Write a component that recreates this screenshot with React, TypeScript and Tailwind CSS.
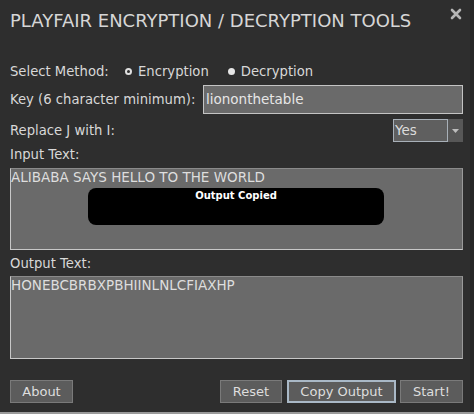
import React from "react";

export default function App() {
  const font = { fontFamily: '"DejaVu Sans", Verdana, sans-serif' };
  return (
    <div className="w-[474px] h-[414px] bg-[#2e2e2e] flex flex-col overflow-hidden" style={font}>
      <div className="flex flex-1 min-h-0">
        <div className="flex-1 flex flex-col pl-[10px] pr-[7px] relative">
          {/* title */}
          <div className="h-[40px] flex items-center text-[18px] text-[#d6d6d6] whitespace-nowrap">
            PLAYFAIR ENCRYPTION / DECRYPTION TOOLS
          </div>
          <div className="absolute right-[8px] top-[8px]">
            <svg width="12" height="12" viewBox="0 0 12 12">
              <path d="M2 2 L10 10 M10 2 L2 10" stroke="#b5b5b5" strokeWidth="2.6" strokeLinecap="round" />
            </svg>
          </div>
          {/* select method */}
          <div className="mt-[21px] h-[22px] flex items-center text-[13.2px] text-[#d8d8d8] whitespace-nowrap">
            <span className="w-[115px]">Select Method:</span>
            <span className="flex items-center">
              <span className="w-[7px] h-[7px] rounded-full border-2 border-[#e0e0e0] mr-[6px]"></span>
              Encryption
            </span>
            <span className="flex items-center ml-[19px]">
              <span className="w-[7px] h-[7px] rounded-full bg-[#e6e6e6] mr-[6px]"></span>
              Decryption
            </span>
          </div>
          {/* key */}
          <div className="mt-[2px] h-[29px] flex items-center text-[13.2px] text-[#d8d8d8] whitespace-nowrap">
            <span className="w-[193px]">Key (6 character minimum):</span>
            <div className="flex-1 h-[29px] bg-[#6a6a6a] border border-[#c4c4c4] flex items-center pl-[2px] text-[13.5px] text-[#e6e6e6]">
              liononthetable
            </div>
          </div>
          {/* replace J */}
          <div className="mt-[5px] h-[23px] flex items-center text-[13.2px] text-[#d8d8d8] whitespace-nowrap">
            <span className="flex-1">Replace J with I:</span>
            <div className="flex h-[23px] w-[70px]">
              <div className="w-[55px] h-full bg-[#5f5f5f] border border-[#a8b0b8] flex items-center pl-[1px] text-[13.5px] text-[#dcdcdc]">
                Yes
              </div>
              <div className="flex-1 h-full bg-[#575757] flex items-center justify-center">
                <svg width="7" height="4" viewBox="0 0 7 4">
                  <path d="M0 0 L7 0 L3.5 4 Z" fill="#bdbdbd" />
                </svg>
              </div>
            </div>
          </div>
          {/* input label */}
          <div className="mt-[4px] h-[18px] flex items-center text-[13.2px] text-[#d8d8d8]">Input Text:</div>
          <div className="mt-[4px] h-[82px] bg-[#6a6a6a] border border-[#c8c8c8] border-t-[#8a8a8a] border-r-[#9a9a9a] text-[13.5px] text-[#dedede] leading-[17px] relative whitespace-nowrap">
            ALIBABA SAYS HELLO TO THE WORLD
            <div className="absolute left-[77px] top-[19px] w-[296px] h-[37px] bg-black rounded-[8px] flex justify-center pt-[2px] text-[10px] font-bold text-white leading-[12px]">
              Output Copied
            </div>
          </div>
          {/* output label */}
          <div className="mt-[5px] h-[17px] flex items-center text-[13.2px] text-[#d8d8d8]">Output Text:</div>
          <div className="mt-[4px] h-[83px] bg-[#6a6a6a] border border-[#c8c8c8] border-t-[#8a8a8a] border-r-[#9a9a9a] text-[13.5px] text-[#dedede] leading-[17px] whitespace-nowrap">
            HONEBCBRBXPBHIINLNLCFIAXHP
          </div>
          {/* buttons */}
          <div className="mt-[21px] h-[23px] flex items-center text-[13px] text-[#dedede] whitespace-nowrap">
            <button className="w-[63px] h-[23px] bg-[#5c5c5c] border border-[#7a7a7a] flex items-center justify-center">About</button>
            <div className="flex-1"></div>
            <button className="w-[62px] h-[23px] bg-[#5c5c5c] border border-[#7a7a7a] flex items-center justify-center">Reset</button>
            <button className="ml-[5px] w-[109px] h-[23px] bg-[#5c5c5c] border-2 border-[#a9b8c6] flex items-center justify-center">Copy Output</button>
            <button className="ml-[4px] w-[63px] h-[23px] bg-[#5c5c5c] border border-[#7a7a7a] flex items-center justify-center">Start!</button>
          </div>
        </div>
        <div className="w-[4px] bg-[#252525]"></div>
      </div>
      <div className="h-[2px] bg-[#9a9a9a]"></div>
    </div>
  );
}
